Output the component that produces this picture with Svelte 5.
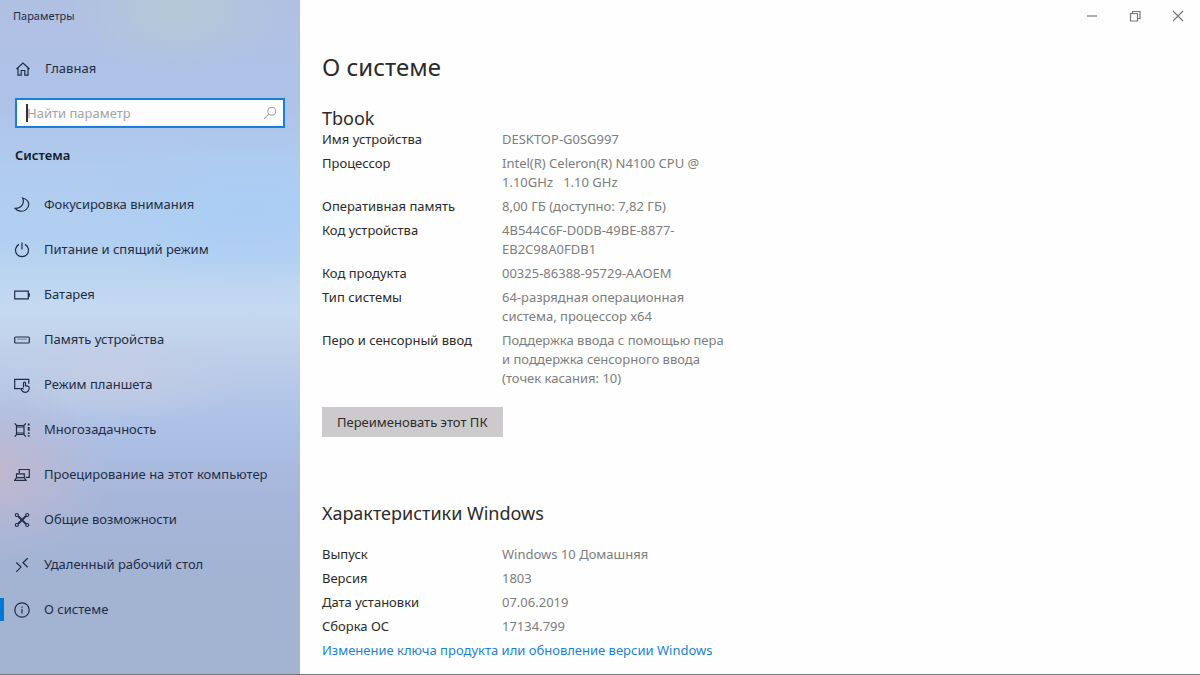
<script lang="ts">
    type Row = { label: string; value: string };

    const navItems = [
        { icon: 'moon', label: 'Фокусировка внимания' },
        { icon: 'power', label: 'Питание и спящий режим' },
        { icon: 'battery', label: 'Батарея' },
        { icon: 'storage', label: 'Память устройства' },
        { icon: 'tablet', label: 'Режим планшета' },
        { icon: 'multitask', label: 'Многозадачность' },
        { icon: 'project', label: 'Проецирование на этот компьютер' },
        { icon: 'shared', label: 'Общие возможности' },
        { icon: 'remote', label: 'Удаленный рабочий стол' },
        { icon: 'info', label: 'О системе' }
    ];

    const deviceRows: Row[] = [
        { label: 'Имя устройства', value: 'DESKTOP-G0SG997' },
        { label: 'Процессор', value: 'Intel(R) Celeron(R) N4100 CPU @ 1.10GHz\u00a0\u00a0 1.10 GHz' },
        { label: 'Оперативная память', value: '8,00 ГБ (доступно: 7,82 ГБ)' },
        { label: 'Код устройства', value: '4B544C6F-D0DB-49BE-8877-EB2C98A0FDB1' },
        { label: 'Код продукта', value: '00325-86388-95729-AAOEM' },
        { label: 'Тип системы', value: '64-разрядная операционная система, процессор x64' },
        { label: 'Перо и сенсорный ввод', value: 'Поддержка ввода с помощью пера и поддержка сенсорного ввода (точек касания: 10)' }
    ];

    const windowsRows: Row[] = [
        { label: 'Выпуск', value: 'Windows 10 Домашняя' },
        { label: 'Версия', value: '1803' },
        { label: 'Дата установки', value: '07.06.2019' },
        { label: 'Сборка ОС', value: '17134.799' }
    ];

    let current = $state('О системе');
    let query = $state('');
</script>

{#snippet icon(name: string)}
    <svg class="icon" viewBox="0 0 16 16" aria-hidden="true">
        {#if name === 'home'}
            <path d="M1.5 8 8 2l6.5 6M3 7v7.2h3.2V9.5h3.6v4.7H13V7" />
        {:else if name === 'moon'}
            <path d="M8.6 1C11 6 7.500 11.600 1 11.300c2.800 3.200 7.600 4 11 1.300 4.300-3.500 3.800-9.600-3.400-11.600z" />
        {:else if name === 'power'}
            <path d="M5 2.400a6.500 6.500 0 1 0 6 0M8 .500v7" />
        {:else if name === 'battery'}
            <path d="M.700 4.200h13.600v7.600H.700zM15.300 6.300v3.400" />
        {:else if name === 'storage'}
            <rect x=".7" y="5" width="14.600" height="6" rx="1" />
            <path d="M3 7.200h10" stroke-opacity=".4" />
        {:else if name === 'tablet'}
            <path d="M6.500 11.600H.700V2.300h14.100v4.500" />
            <path d="M9.500 10.500V6a1 1 0 0 1 2 0v2.700l2.300.5c1 .2 1.500.9 1.400 1.800-.2 2.300-1.500 4.300-3.900 4.300-2.200 0-3.500-1.500-4.300-3.600.9-.8 1.700-.4 2.500.6" />
        {:else if name === 'multitask'}
            <path d="M.700 1.300l1.800 2.200h7.500l1.800-2.200M.700 14.700l1.800-2.200h7.500l1.800 2.200M2.500 3.500v9M10 3.500v9M2.500 5h7.500M2.500 11h7.500" />
            <path class="heavy" d="M14.700 1.500v2M14.700 5v3.800M14.700 10.500v1.500M14.700 13.300v1.500" />
        {:else if name === 'project'}
            <path d="M5.200 6V2.500h10.100v7.800h-3.500M2.500 10.700V6.800h7.800v3.900zM.700 13.300l1.800-2.600h7.800l1.700 2.600z" />
        {:else if name === 'shared'}
            <path class="heavy" d="m4 4 8 8M12 4l-8 8" />
            <circle cx="2.800" cy="3" r="1.500" />
            <circle cx="13.200" cy="3" r="1.500" />
            <circle cx="2.800" cy="13" r="1.500" />
            <circle cx="13.200" cy="13" r="1.500" />
        {:else if name === 'remote'}
            <path d="m2.300 5.500 4.700 4.600-4.700 4.700M13.700 1.200 9 5.700l4.700 4.600" />
        {:else if name === 'info'}
            <circle cx="8" cy="8" r="7.200" />
            <path d="M8 7v4.500M8 4.500v1.300" />
        {:else if name === 'search'}
            <circle cx="10" cy="6" r="4.500" />
            <path d="M6.700 9.300 1.200 14.800" />
        {:else if name === 'minimize'}
            <path d="M3 8h10" />
        {:else if name === 'restore'}
            <path d="M3.500 5.500h7V13h-7zM5.500 5.300V3.500H13v7h-2.300" />
        {:else if name === 'close'}
            <path d="m3 3 10 10M13 3 3 13" />
        {/if}
    </svg>
{/snippet}

{#snippet specs(rows: Row[])}
    <table>
        <tbody>
            {#each rows as row}
                <tr>
                    <th scope="row">{row.label}</th>
                    <td>{row.value}</td>
                </tr>
            {/each}
        </tbody>
    </table>
{/snippet}

<div class="window">
    <aside>
        <div class="app-title">Параметры</div>

        <button class="nav-item home">
            {@render icon('home')}
            <span>Главная</span>
        </button>

        <div class="search">
            <input type="text" placeholder="Найти параметр" aria-label="Найти параметр" bind:value={query} />
            {#if !query}
                <span class="caret"></span>
            {/if}
            {@render icon('search')}
        </div>

        <h2 class="group">Система</h2>

        <nav>
            {#each navItems as item}
                <button
                    class="nav-item"
                    class:active={item.label === current}
                    onclick={() => (current = item.label)}
                >
                    {@render icon(item.icon)}
                    <span>{item.label}</span>
                </button>
            {/each}
        </nav>
    </aside>

    <div class="content">
        <div class="controls">
            <button aria-label="Свернуть">{@render icon('minimize')}</button>
            <button aria-label="Восстановить">{@render icon('restore')}</button>
            <button aria-label="Закрыть">{@render icon('close')}</button>
        </div>

        <main>
            <h1>О системе</h1>

            <section>
                <h2>Tbook</h2>
                {@render specs(deviceRows)}
                <button class="rename">Переименовать этот ПК</button>
            </section>

            <section class="edition">
                <h2>Характеристики Windows</h2>
                {@render specs(windowsRows)}
                <a href="#activation">Изменение ключа продукта или обновление версии Windows</a>
            </section>
        </main>
    </div>
</div>

<style>
    :global(body) {
        margin: 0;
    }

    .window {
        display: flex;
        box-sizing: border-box;
        min-height: 100vh;
        border-bottom: 1px solid #74767c;
        background: #fefefe;
        color: #2b2b2b;
        font-family: "Segoe UI", "Noto Sans", sans-serif;
        font-size: 13px;
        line-height: 19px;
    }

    button {
        border: 0;
        background: none;
        color: inherit;
        font: inherit;
    }

    h1,
    h2 {
        margin: 0;
        font-weight: 400;
    }

    .icon {
        flex: none;
        width: 16px;
        height: 16px;
        fill: none;
        stroke: currentColor;
        stroke-width: 1.2;
    }

    .icon .heavy {
        stroke-width: 1.8;
    }

    /* Sidebar: soft colour spots over a vertical wash */
    aside {
        flex: none;
        box-sizing: border-box;
        width: 300px;
        color: #1f2d44;
        background:
            radial-gradient(ellipse 110px 60px at 180px 12px, #b4c9d6, transparent),
            radial-gradient(ellipse 110px 90px at 0 70%, #bfb8cf, transparent),
            radial-gradient(ellipse 140px 50px at 110px 56%, #c3cce3, transparent),
            radial-gradient(ellipse 170px 80px at 250px 31%, #abcdf5, transparent),
            linear-gradient(#b0c0e3, #aec2e8 15%, #b0cbee 25%, #b2d0f1 36%, #c5daf0 46%, #bfd0ea 52%, #aec2e7 62%, #a6b6da 74%, #a3b3d3 86%, #a2b3d0);
    }

    .app-title {
        padding: 6px 13px 0;
        font-size: 11px;
    }

    .nav-item {
        position: relative;
        display: flex;
        align-items: center;
        gap: 14px;
        box-sizing: border-box;
        width: 100%;
        height: 45px;
        padding: 0 15px;
        text-align: left;
        white-space: nowrap;
    }

    nav .nav-item {
        padding-left: 14px;
    }

    .home {
        margin: 21px 0 7px;
    }

    .active::before {
        content: "";
        position: absolute;
        left: 0;
        width: 4px;
        height: 23px;
        background: #0078d7;
    }

    .search {
        position: relative;
        display: flex;
        align-items: center;
        box-sizing: border-box;
        height: 30px;
        margin: 0 15px;
        padding-right: 6px;
        border: 2px solid #1a7fd8;
        background: #fdfdfe;
    }

    .search input {
        flex: 1;
        min-width: 0;
        padding: 0 0 0 10px;
        border: 0;
        outline: 0;
        background: none;
        color: #222;
        font: inherit;
    }

    .search input::placeholder {
        color: #a3a4a8;
        opacity: 1;
    }

    .search .icon {
        width: 14px;
        height: 14px;
        color: #a3a4a8;
    }

    .caret {
        position: absolute;
        left: 9px;
        width: 2px;
        height: 18px;
        background: #333;
    }

    .group {
        padding: 18px 15px 17px;
        color: #111d2d;
        font-size: 13px;
        font-weight: 600;
    }

    .content {
        flex: 1;
        min-width: 0;
    }

    .controls {
        display: flex;
        justify-content: flex-end;
        height: 32px;
        padding-right: 1px;
    }

    .controls button {
        display: flex;
        align-items: center;
        justify-content: center;
        width: 43px;
        padding: 0;
        color: #777;
    }

    main {
        padding: 18px 22px 12px;
    }

    h1 {
        font-size: 24px;
        line-height: 34px;
    }

    main h2 {
        font-size: 18px;
        line-height: 24px;
    }

    section {
        padding-top: 22px;
    }

    table {
        border-collapse: collapse;
    }

    th,
    td {
        padding: 0 0 5px;
        font-weight: 400;
        text-align: left;
        vertical-align: top;
    }

    th {
        width: 180px;
    }

    td {
        width: 230px;
        color: #7d7d7d;
    }

    .rename {
        height: 30px;
        margin-top: 14px;
        padding: 0 15px;
        background: #cccacc;
    }

    .edition {
        padding-top: 64px;
    }

    .edition h2 {
        margin-bottom: 20px;
    }

    .edition a {
        color: #1b83d6;
        text-decoration: none;
    }
</style>
